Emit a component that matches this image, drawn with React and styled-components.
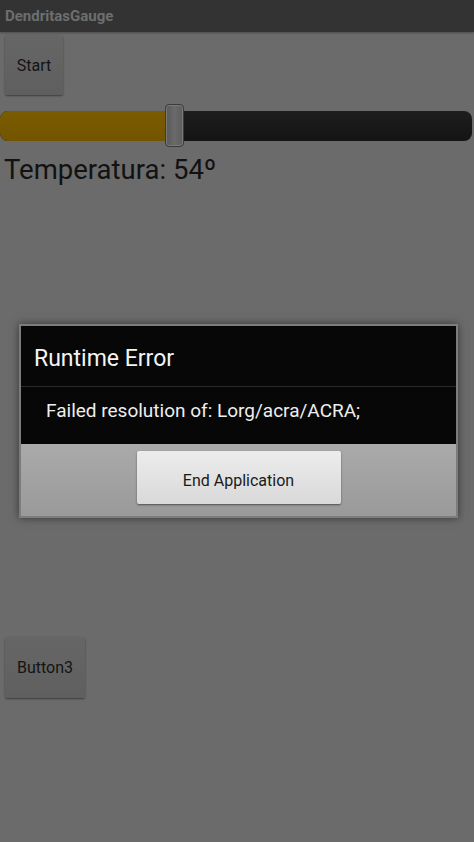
import React from "react";
import styled, { createGlobalStyle } from "styled-components";

const Global = createGlobalStyle`
  html, body { margin: 0; padding: 0; background: #6b6b6b; }
  body { font-family: Roboto, "Noto Sans", sans-serif; }
`;

const Screen = styled.div`
  position: relative;
  width: 474px;
  height: 842px;
  background: #6b6b6b;
  overflow: hidden;
`;

const TitleBar = styled.div`
  height: 32px;
  background: #333333;
  display: flex;
  align-items: center;
  padding-left: 5px;
  color: #6e6e6e;
  font-weight: 700;
  font-size: 15px;
  box-shadow: 0 1px 2px rgba(0,0,0,0.3);
`;

const Content = styled.div`
  display: flex;
  flex-direction: column;
  padding-top: 3px;
`;

const AppButton = styled.div`
  margin-left: 5px;
  width: ${(p) => p.w}px;
  height: ${(p) => p.h}px;
  background: linear-gradient(#666666, #5f5f5f);
  border-radius: 2px;
  box-shadow: 0 1px 2px rgba(0,0,0,0.45);
  display: flex;
  align-items: center;
  justify-content: center;
  color: #141414;
  font-size: 16px;
  margin-top: ${(p) => p.mt || 0}px;
`;

const SliderRow = styled.div`
  position: relative;
  margin-top: 9px;
  height: 44px;
  display: flex;
  align-items: center;
`;

const Track = styled.div`
  position: relative;
  width: 472px;
  height: 30px;
  border-radius: 8px;
  background: linear-gradient(#1e1e1e, #141414);
  overflow: hidden;
`;

const Fill = styled.div`
  height: 100%;
  background: linear-gradient(#7a5b00, #735500);
`;

const Thumb = styled.div`
  position: absolute;
  top: 0px;
  width: 17px;
  height: 41px;
  border-radius: 4px;
  background: linear-gradient(90deg, #595959, #6a6a6a 50%, #5c5c5c);
  border: 1px solid #3a3a3a;
  box-shadow: inset 0 0 0 1px #7a7a7a;
`;

const Label = styled.div`
  margin-left: 4px;
  margin-top: 5px;
  font-size: 27.5px;
  color: #121212;
  line-height: 34px;
`;

const Overlay = styled.div`
  position: absolute;
  left: 19px;
  top: 324px;
  width: 435px;
  border: 2px solid #7c7c7c;
  box-shadow: 0 0 8px rgba(0,0,0,0.5);
  background: #070707;
`;

const DialogTitle = styled.div`
  height: 61px;
  display: flex;
  align-items: center;
  padding-left: 13px;
  padding-top: 4px;
  box-sizing: border-box;
  color: #f4f4f4;
  font-size: 23px;
  border-bottom: 1px solid #2a2a2a;
`;

const DialogMessage = styled.div`
  height: 57px;
  box-sizing: border-box;
  padding-top: 12px;
  padding-left: 25px;
  color: #eeeeee;
  font-size: 19px;
  line-height: 24px;
`;

const ButtonBar = styled.div`
  height: 72px;
  background: linear-gradient(#aaaaaa, #a0a0a0 60%, #9a9a9a);
  display: flex;
  justify-content: center;
  padding-top: 7px;
  box-sizing: border-box;
`;

const DialogButton = styled.div`
  width: 204px;
  height: 53px;
  background: linear-gradient(#ececec, #d9d9d9);
  border-radius: 2px;
  box-shadow: 0 1px 2px rgba(0,0,0,0.5);
  display: flex;
  align-items: center;
  justify-content: center;
  padding-top: 6px;
  box-sizing: border-box;
  color: #1a1a1a;
  font-size: 16px;
`;

export default function App() {
  const pct = 0.36;
  return (
    <Screen>
      <Global />
      <TitleBar>DendritasGauge</TitleBar>
      <Content>
        <AppButton w={58} h={60}>Start</AppButton>
        <SliderRow>
          <Track>
            <Fill style={{ width: `${Math.round(472 * pct)}px` }} />
          </Track>
          <Thumb style={{ left: `${Math.round(472 * pct) - 5}px` }} />
        </SliderRow>
        <Label>Temperatura: 54º</Label>
        <AppButton w={80} h={61} mt={450}>Button3</AppButton>
      </Content>
      <Overlay>
        <DialogTitle>Runtime Error</DialogTitle>
        <DialogMessage>Failed resolution of: Lorg/acra/ACRA;</DialogMessage>
        <ButtonBar>
          <DialogButton>End Application</DialogButton>
        </ButtonBar>
      </Overlay>
    </Screen>
  );
}
